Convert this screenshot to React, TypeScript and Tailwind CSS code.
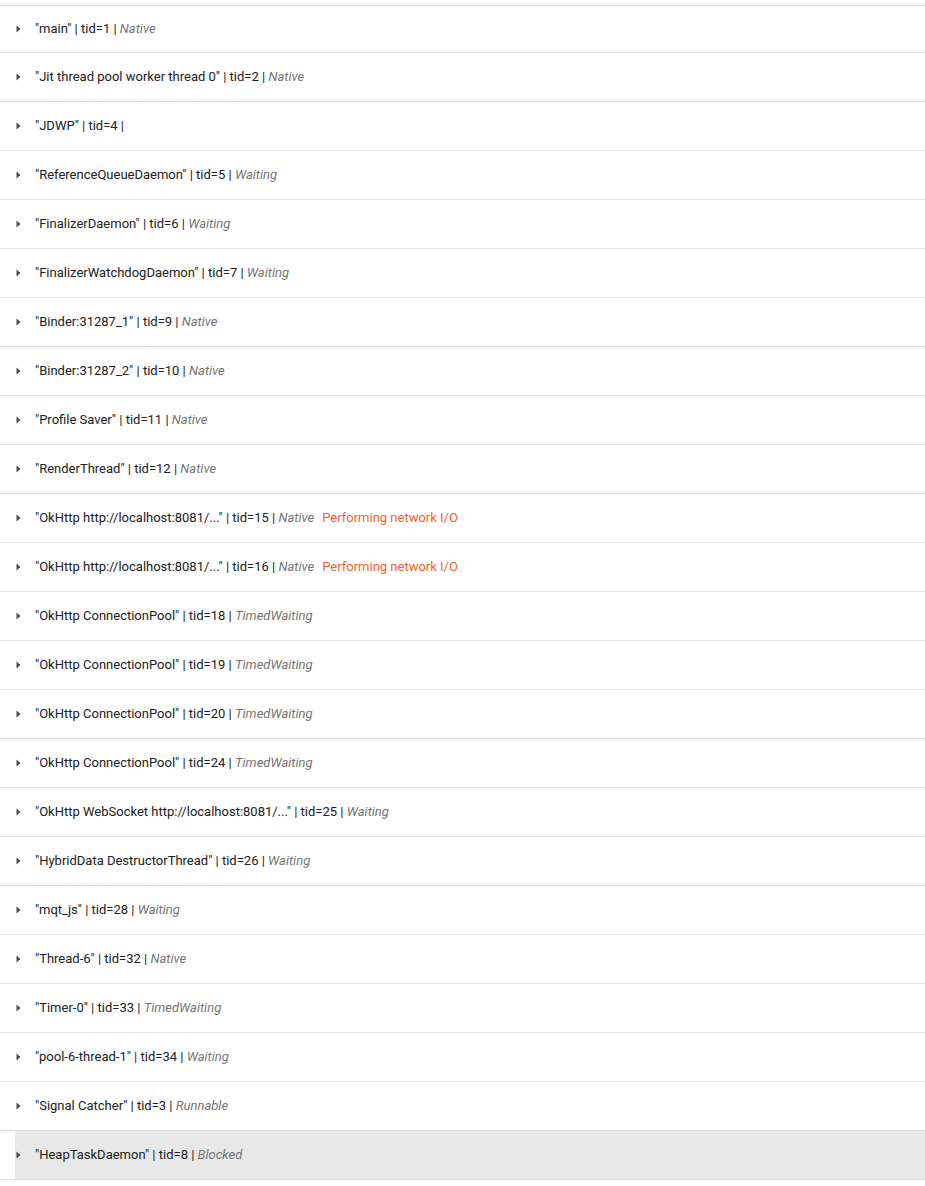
const threads: { name: string; tid: number; state: string; note?: string }[] = [
  { name: 'main', tid: 1, state: 'Native' },
  { name: 'Jit thread pool worker thread 0', tid: 2, state: 'Native' },
  { name: 'JDWP', tid: 4, state: '' },
  { name: 'ReferenceQueueDaemon', tid: 5, state: 'Waiting' },
  { name: 'FinalizerDaemon', tid: 6, state: 'Waiting' },
  { name: 'FinalizerWatchdogDaemon', tid: 7, state: 'Waiting' },
  { name: 'Binder:31287_1', tid: 9, state: 'Native' },
  { name: 'Binder:31287_2', tid: 10, state: 'Native' },
  { name: 'Profile Saver', tid: 11, state: 'Native' },
  { name: 'RenderThread', tid: 12, state: 'Native' },
  { name: 'OkHttp http://localhost:8081/...', tid: 15, state: 'Native', note: 'Performing network I/O' },
  { name: 'OkHttp http://localhost:8081/...', tid: 16, state: 'Native', note: 'Performing network I/O' },
  { name: 'OkHttp ConnectionPool', tid: 18, state: 'TimedWaiting' },
  { name: 'OkHttp ConnectionPool', tid: 19, state: 'TimedWaiting' },
  { name: 'OkHttp ConnectionPool', tid: 20, state: 'TimedWaiting' },
  { name: 'OkHttp ConnectionPool', tid: 24, state: 'TimedWaiting' },
  { name: 'OkHttp WebSocket http://localhost:8081/...', tid: 25, state: 'Waiting' },
  { name: 'HybridData DestructorThread', tid: 26, state: 'Waiting' },
  { name: 'mqt_js', tid: 28, state: 'Waiting' },
  { name: 'Thread-6', tid: 32, state: 'Native' },
  { name: 'Timer-0', tid: 33, state: 'TimedWaiting' },
  { name: 'pool-6-thread-1', tid: 34, state: 'Waiting' },
  { name: 'Signal Catcher', tid: 3, state: 'Runnable' },
  { name: 'HeapTaskDaemon', tid: 8, state: 'Blocked' },
];

// small right-pointing disclosure triangle
function Caret() {
  return (
    <svg width="5" height="8" viewBox="0 0 5 8" className="shrink-0">
      <path d="M0.5 0.5 L4.5 4 L0.5 7.5 Z" fill="#4a4a4a" />
    </svg>
  );
}

export default function App() {
  return (
    <div
      className="bg-white min-h-screen pt-[5px]"
      style={{ fontFamily: 'Roboto, "Liberation Sans", sans-serif' }}
    >
      <div className="border-t border-[#e0e0e0]">
        {threads.map((t, i) => {
          const selected = i === threads.length - 1;
          return (
            <div
              key={i}
              className={`border-b border-[#e0e0e0] ${i === 0 ? 'h-[47px]' : 'h-[49px]'}`}
            >
              <div
                className={`h-full flex items-center text-[13px] text-[#212121] ${
                  selected ? 'ml-[15px] bg-[#e8e8e8] pl-[1px]' : 'pl-[16px]'
                }`}
              >
                <Caret />
                <span className="ml-[14px] whitespace-pre leading-none pb-[1px]">
                  "{t.name}" | tid={t.tid} |{' '}
                  {t.state && <i className="text-[#757575]">{t.state}</i>}
                </span>
                {t.note && (
                  <span className="ml-[8px] leading-none pb-[1px] text-[#f4622a]">{t.note}</span>
                )}
              </div>
            </div>
          );
        })}
      </div>
    </div>
  );
}
